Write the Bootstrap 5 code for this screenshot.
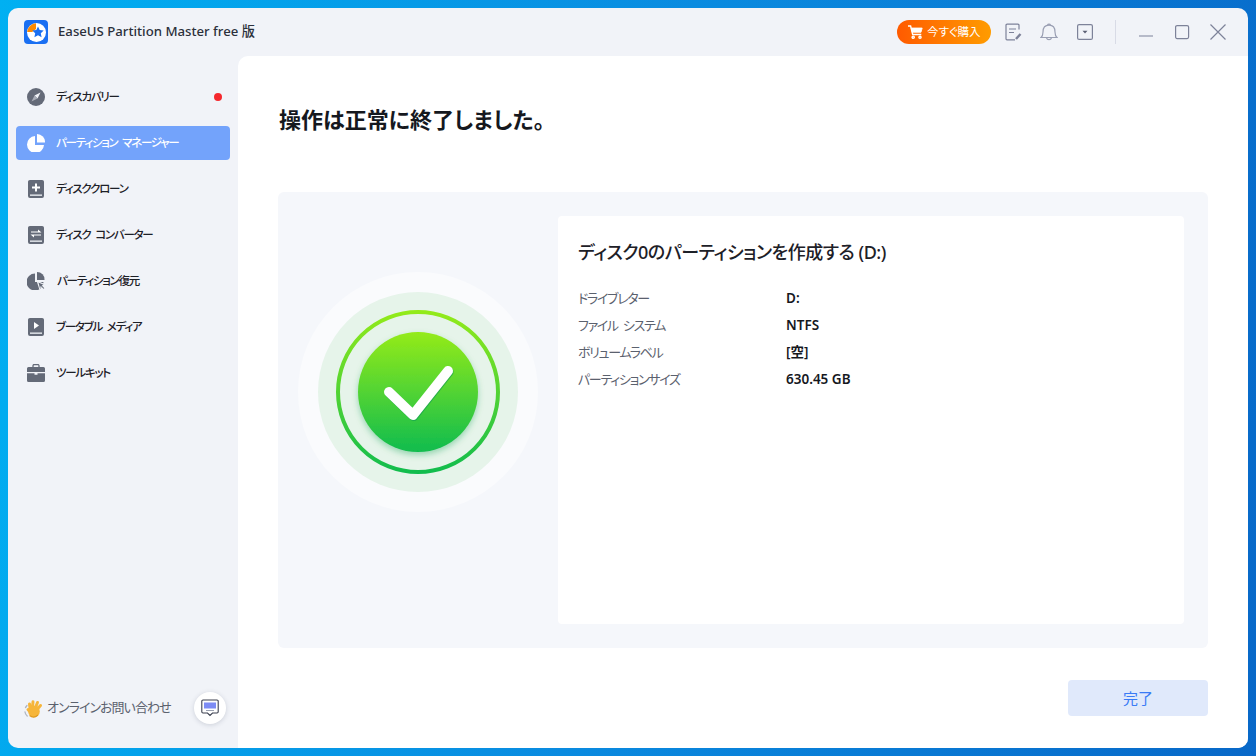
<!doctype html>
<html lang="ja">
<head>
    <meta charset="utf-8">
    <meta name="viewport" content="width=device-width, initial-scale=1">
    <title>EaseUS Partition Master</title>
    <link href="https://cdn.jsdelivr.net/npm/bootstrap@5.3.3/dist/css/bootstrap.min.css" rel="stylesheet">
    <style>
        html, body {
            height: 756px;
            overflow: hidden;
        }
        body {
            background: linear-gradient(100deg, #00b0f2 0%, #0a8be0 50%, #0868c8 100%);
            font-family: "Noto Sans", "Noto Sans CJK JP", sans-serif;
            font-feature-settings: "palt";
            color: #1a1d24;
        }
        .app-window {
            width: 1240px;
            height: 740px;
            background: #f1f3f8;
            border-radius: 10px;
            overflow: hidden;
        }
        .title-bar {
            height: 48px;
            padding: 0 22px 0 16px;
        }
        .app-name {
            font-size: 13.2px;
            font-weight: 500;
            color: #2b303b;
            margin-left: 10px;
        }
        .buy-btn {
            width: 94px;
            height: 24px;
            border-radius: 12px;
            background: linear-gradient(90deg, #ff5a00, #ff9c00);
            color: #fff;
            font-size: 11.5px;
            gap: 4px;
            padding-left: 11px;
        }
        .top-icon { display: block; }
        .top-sep {
            width: 1px;
            height: 24px;
            background: #d8dbe6;
        }
        .side-bar {
            width: 230px;
            padding: 24px 8px 24px 8px;
        }
        .side-item {
            height: 34px;
            border-radius: 4px;
            padding: 0 8px 0 11px;
            font-size: 11.5px;
            font-weight: 500;
            letter-spacing: -1.25px;
            word-spacing: 3px;
            color: #1d2027;
            gap: 11px;
            margin-bottom: 12px;
        }
        .side-item.is-active {
            background: #73a3fb;
            color: #fff;
        }
        .red-dot {
            width: 8px;
            height: 8px;
            border-radius: 50%;
            background: #f5282d;
        }
        .contact-row {
            font-size: 13px;
            letter-spacing: -.95px;
            color: #5b616e;
            padding-left: 8px;
        }
        .chat-btn {
            width: 32px;
            height: 32px;
            border-radius: 50%;
            background: #fff;
            box-shadow: 0 1px 5px rgba(40, 50, 80, .18);
            margin-right: 4px;
        }
        .main-pane {
            background: #fff;
            border-top-left-radius: 10px;
            padding: 0 40px 32px 40px;
        }
        .done-title {
            height: 136px;
            padding-top: 45px;
            padding-left: 1px;
            font-size: 22px;
            font-weight: 700;
            line-height: 36px;
            color: #15181e;
            margin: 0;
        }
        .result-panel {
            height: 456px;
            background: #f5f7fb;
            border-radius: 6px;
            padding: 24px 24px 24px 20px;
            gap: 20px;
        }
        .ok-mark {
            margin-top: 56px;
            flex: 0 0 240px;
        }
        .info-card {
            background: #fff;
            border-radius: 4px;
            padding: 20px;
        }
        .info-title {
            font-size: 18px;
            font-weight: 500;
            letter-spacing: -.45px;
            line-height: 32px;
            color: #1d2027;
            margin-bottom: 17px;
        }
        .info-row {
            height: 27px;
            font-size: 13px;
            line-height: 27px;
        }
        .info-label {
            width: 208px;
            color: #5b616e;
            letter-spacing: -1.3px;
            word-spacing: 3px;
        }
        .info-value {
            font-size: 13.5px;
            font-weight: 600;
            color: #15181e;
        }
        .finish-btn {
            width: 140px;
            height: 36px;
            background: #e0e9fb;
            border: 0;
            border-radius: 4px;
            color: #3a7bf5;
            font-size: 15px;
            padding: 0;
        }
    </style>
</head>
<body class="p-2">
<div class="app-window d-flex flex-column">
    <div class="title-bar d-flex align-items-center flex-shrink-0">
        <svg class="top-icon" width="24" height="24" viewBox="0 0 24 24">
            <rect width="24" height="24" rx="4" fill="#1a6ff2"/>
            <circle cx="12.500" cy="12.500" r="9.500" fill="#fff"/>
            <path d="M12 3.200a9.300 9.300 0 0 0-8.800 8.800h5l3.800-3z" fill="#ff8a00"/>
            <path d="M14 6.500l1.700 3.600 4 .5-2.900 2.700.8 4-3.600-2-3.600 2 .8-4-2.900-2.700 4-.5z" fill="#1a6ff2"/>
        </svg>
        <span class="app-name">EaseUS Partition Master free 版</span>
        <div class="ms-auto d-flex align-items-center">
            <div class="buy-btn d-flex align-items-center">
                <svg width="15" height="14" viewBox="0 0 15 14" fill="none" stroke="#fff" stroke-width="1.400">
                    <path d="M0 1h2.600L4.700 9.500h8.600"/>
                    <path d="M3.200 3h11l-1.200 4.300H4.200z" fill="#fff" stroke-width=".8"/>
                    <circle cx="5.200" cy="12.200" r="1.100"/>
                    <circle cx="12" cy="12.200" r="1.100"/>
                </svg>
                <span>今すぐ購入</span>
            </div>
            <svg class="top-icon" style="margin-left:13px" width="18" height="18" viewBox="0 0 18 18" fill="none" stroke="#7d8299" stroke-width="1.200">
                <path d="M15 6.500V2.200a1 1 0 0 0-1-1H3a1 1 0 0 0-1 1v13.600a1 1 0 0 0 1 1h8"/>
                <path d="M5 6h7M5 9.500h5"/>
                <path d="M12 16l4.500-5" stroke-width="2.400"/>
            </svg>
            <svg class="top-icon" style="margin-left:18px" width="18" height="20" viewBox="0 0 18 20" fill="none" stroke="#9a9fb3" stroke-width="1.200">
                <path d="M1 15.500c1.800-1.500 2-3 2-5.500C3 6 5 3.200 9 3.200S15 6 15 10c0 2.500.2 4 2 5.500z"/>
                <path d="M7.500 3.200a1.600 1.600 0 0 1 3 0M6.500 15.800a2.600 2.600 0 0 0 5 0"/>
            </svg>
            <svg class="top-icon" style="margin-left:19px" width="16" height="16" viewBox="0 0 16 16" fill="none" stroke="#7d8299" stroke-width="1.200">
                <rect x=".6" y=".6" width="14.800" height="14.800" rx="1.500"/>
                <path d="M5.500 6.800h5L8 9.500z" fill="#5b6074" stroke="none"/>
            </svg>
            <div class="top-sep" style="margin-left:22px"></div>
            <svg class="top-icon" style="margin-left:22px" width="16" height="16" viewBox="0 0 16 16" stroke="#7d8299" stroke-width="1.200">
                <path d="M1 12h14"/>
            </svg>
            <svg class="top-icon" style="margin-left:20px" width="16" height="16" viewBox="0 0 16 16" fill="none" stroke="#7d8299" stroke-width="1.200">
                <rect x="1.600" y="1.600" width="13" height="13" rx="1.500"/>
            </svg>
            <svg class="top-icon" style="margin-left:20px" width="16" height="16" viewBox="0 0 16 16" stroke="#7d8299" stroke-width="1.200">
                <path d="M.5 .5l15 15M15.500 .5l-15 15"/>
            </svg>
        </div>
    </div>

    <div class="d-flex flex-grow-1">
        <div class="side-bar d-flex flex-column flex-shrink-0">
            <div class="side-item d-flex align-items-center">
                <svg width="18" height="18" viewBox="0 0 18 18"><circle cx="9" cy="9" r="9" fill="#646a78"/><path d="M13.500 4.500L10.500 10.500 7.500 7.500z" fill="#f1f3f8"/><path d="M4.500 13.500L7.500 7.500l3 3z" fill="#a9adb8"/></svg>
                <span>ディスカバリー</span>
                <span class="red-dot ms-auto"></span>
            </div>
            <div class="side-item is-active d-flex align-items-center">
                <svg width="18" height="18" viewBox="0 0 18 18" fill="#fff"><path d="M8 2v9h9a8.500 8.500 0 1 1-9-9z"/><path d="M10 0a8 8 0 0 1 8 8.500h-8z"/></svg>
                <span>パーティション マネージャー</span>
            </div>
            <div class="side-item d-flex align-items-center">
                <svg width="18" height="18" viewBox="0 0 18 18"><path d="M3 0h12a2 2 0 0 1 2 2.200V16a2 2 0 0 1-2 2H3a2 2 0 0 1-2-2V2.200A2 2 0 0 1 3 0z" fill="#646a78"/><rect x="3" y="14.500" width="12" height="1.300" fill="#f1f3f8"/><path d="M8 3.500h2v3h3v2h-3v3H8v-3H5v-2h3z" fill="#fff"/></svg>
                <span>ディスククローン</span>
            </div>
            <div class="side-item d-flex align-items-center">
                <svg width="18" height="18" viewBox="0 0 18 18"><path d="M3 0h12a2 2 0 0 1 2 2.200V16a2 2 0 0 1-2 2H3a2 2 0 0 1-2-2V2.200A2 2 0 0 1 3 0z" fill="#646a78"/><rect x="3" y="14.500" width="12" height="1.300" fill="#f1f3f8"/><path d="M4 5.500h7V3.500l3.500 3H4zM14 9.500H7v2l-3.500-3H14z" fill="#fff"/></svg>
                <span>ディスク コンバーター</span>
            </div>
            <div class="side-item d-flex align-items-center">
                <svg width="19" height="18" viewBox="0 0 19 18"><path d="M8 1.500V10h8.500A8.500 8.500 0 1 1 8 1.500z" fill="#646a78"/><path d="M10 0a7.500 7.500 0 0 1 7.500 8H10z" fill="#646a78"/><path d="M9.500 8.500l9.500 4-3 1.500 3 3-2 1-3-3-1.500 3z" fill="#f1f3f8"/><path d="M11.500 10.500l5 2.200-1.800.8 2.600 2.800-.8.500-2.700-2.700-.9 1.800z" fill="#646a78"/></svg>
                <span>パーティション復元</span>
            </div>
            <div class="side-item d-flex align-items-center">
                <svg width="18" height="18" viewBox="0 0 18 18"><path d="M3 0h12a2 2 0 0 1 2 2.200V16a2 2 0 0 1-2 2H3a2 2 0 0 1-2-2V2.200A2 2 0 0 1 3 0z" fill="#646a78"/><rect x="3" y="14.500" width="12" height="1.300" fill="#f1f3f8"/><path d="M7 4l5 3.500L7 11z" fill="#fff"/></svg>
                <span>ブータブル メディア</span>
            </div>
            <div class="side-item d-flex align-items-center">
                <svg width="18" height="18" viewBox="0 0 18 18"><path d="M6 3V1.800A1.300 1.300 0 0 1 7.300.5h3.400A1.300 1.300 0 0 1 12 1.800V3" fill="none" stroke="#646a78" stroke-width="1.300"/><path d="M1.500 3h15A1.500 1.500 0 0 1 18 4.500V8H0V4.500A1.500 1.500 0 0 1 1.500 3z" fill="#646a78"/><path d="M0 9.200h7.500v1.600h3V9.200H18v7.300a1.500 1.500 0 0 1-1.500 1.500h-15A1.500 1.500 0 0 1 0 16.500z" fill="#646a78"/></svg>
                <span>ツールキット</span>
            </div>

            <div class="contact-row mt-auto d-flex align-items-center">
                <svg width="19" height="19" viewBox="0 0 19 19">
                    <path d="M1 13c.2 1.500 1 3 2.200 4M1.500 8.500L3 6.500" stroke="#b0b5c0" stroke-width="1.300" fill="none" stroke-linecap="round"/>
                    <g stroke="#f6b53a" stroke-width="3" stroke-linecap="round">
                        <path d="M6 9L5.500 5M8.500 8L9 2.800M11.500 8.500L13.500 3.500M13 10.500L16.500 6.500M4 10.500L8 15"/>
                    </g>
                    <circle cx="10" cy="12.500" r="5.800" fill="#f6b53a"/>
                    <path d="M5.500 16.500c2.500 2 6 1.800 8.500-.5" stroke="#e09a20" stroke-width="1.100" fill="none"/>
                </svg>
                <span class="ms-1">オンラインお問い合わせ</span>
                <div class="chat-btn ms-auto d-flex align-items-center justify-content-center">
                    <svg width="18" height="18" viewBox="0 0 18 18">
                        <path d="M2 1h14a1.200 1.200 0 0 1 1.200 1.200v10.600A1.200 1.200 0 0 1 16 14h-4.500L9 16.500 6.500 14H2a1.200 1.200 0 0 1-1.200-1.200V2.200A1.200 1.200 0 0 1 2 1z" fill="#fff" stroke="#3c4150" stroke-width="1.100"/>
                        <rect x="3" y="3.500" width="12" height="6" fill="#7d8cf5"/>
                        <rect x="5" y="11" width="8" height="1" fill="#9aa0b0"/>
                    </svg>
                </div>
            </div>
        </div>

        <div class="main-pane flex-grow-1 d-flex flex-column">
            <h1 class="done-title">操作は正常に終了しました。</h1>
            <div class="result-panel d-flex">
                <svg class="ok-mark" width="240" height="240" viewBox="0 0 240 240">
                    <defs>
                        <linearGradient id="greenFill" x1="0" y1="0" x2="0" y2="1">
                            <stop offset="0" stop-color="#94eb19"/>
                            <stop offset="1" stop-color="#10bc4e"/>
                        </linearGradient>
                        <linearGradient id="greenRing" gradientUnits="userSpaceOnUse" x1="0" y1="38" x2="0" y2="202">
                            <stop offset="0" stop-color="#94eb19"/>
                            <stop offset="1" stop-color="#10bc4e"/>
                        </linearGradient>
                        <filter id="softDrop" x="-20%" y="-20%" width="140%" height="140%">
                            <feDropShadow dx="0" dy="3" stdDeviation="3" flood-color="#0f9a40" flood-opacity=".35"/>
                        </filter>
                    </defs>
                    <circle cx="120" cy="120" r="120" fill="#fafbfd"/>
                    <circle cx="120" cy="120" r="100" fill="#e6f4ea"/>
                    <circle cx="120" cy="120" r="80" fill="none" stroke="url(#greenRing)" stroke-width="4"/>
                    <circle cx="120" cy="120" r="60" fill="url(#greenFill)" filter="url(#softDrop)"/>
                    <path d="M91 120l24 23 35-44" fill="none" stroke="#0f9a55" stroke-width="10" stroke-linecap="round" stroke-linejoin="round" transform="translate(.6 1)" opacity=".6"/>
                    <path d="M91 120l24 23 35-44" fill="none" stroke="#fff" stroke-width="10" stroke-linecap="round" stroke-linejoin="round"/>
                </svg>
                <div class="info-card flex-grow-1">
                    <div class="info-title">ディスク0のパーティションを作成する (D:)</div>
                    <div class="info-row d-flex"><div class="info-label">ドライブレター</div><div class="info-value">D:</div></div>
                    <div class="info-row d-flex"><div class="info-label">ファイル システム</div><div class="info-value">NTFS</div></div>
                    <div class="info-row d-flex"><div class="info-label">ボリュームラベル</div><div class="info-value">[空]</div></div>
                    <div class="info-row d-flex"><div class="info-label">パーティションサイズ</div><div class="info-value">630.45 GB</div></div>
                </div>
            </div>
            <div class="mt-auto d-flex justify-content-end">
                <button type="button" class="btn finish-btn">完了</button>
            </div>
        </div>
    </div>
</div>
<script src="https://cdn.jsdelivr.net/npm/bootstrap@5.3.3/dist/js/bootstrap.bundle.min.js"></script>
</body>
</html>
